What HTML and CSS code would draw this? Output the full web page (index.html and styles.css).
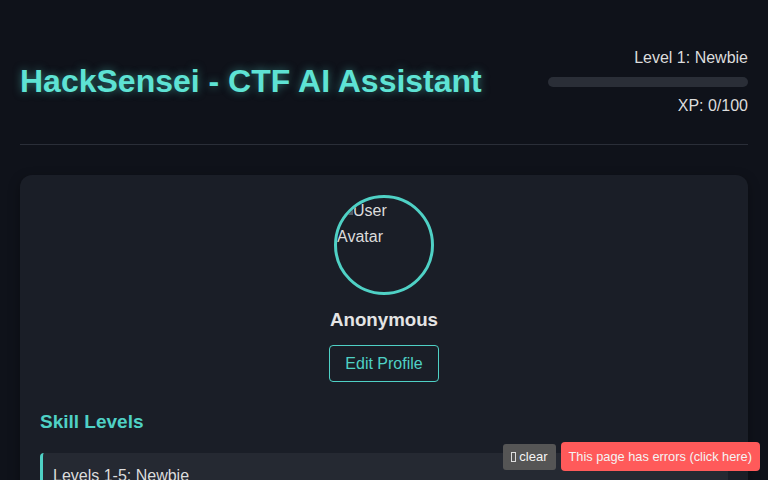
FILE: index.html
```html
<!DOCTYPE html>
<html lang="en">
<head>
<meta charset="utf-8">
<title>HackSensei - CTF AI Assistant</title>
<link rel="stylesheet" href="styles.css">
</head>
<body>
<div class="container">
  <header class="header">
    <h1 class="title">HackSensei - CTF AI Assistant</h1>
    <div class="level-info">
      <div class="level-text">Level 1: Newbie</div>
      <div class="xp-bar"><div class="xp-fill" style="width:0%"></div></div>
      <div class="xp-text">XP: 0/100</div>
    </div>
  </header>
  <section class="card profile">
    <div class="avatar"><span class="broken"></span><span class="alt">User Avatar</span></div>
    <h2 class="username">Anonymous</h2>
    <button class="edit-btn">Edit Profile</button>
    <div class="skills">
      <h3 class="skills-title">Skill Levels</h3>
      <div class="skill-item">Levels 1-5: Newbie</div>
    </div>
  </section>
</div>
<div class="error-bar">
  <button class="clear-btn"><span class="tofu"></span> clear</button>
  <button class="error-btn">This page has errors (click here)</button>
</div>
</body>
</html>
```
FILE: styles.css
```css
* { box-sizing: border-box; }
html, body { margin: 0; padding: 0; }
body {
  background: #0f121a;
  color: #e0e0e0;
  font-family: "Liberation Sans", Arial, sans-serif;
  font-size: 16px;
  line-height: 1.6;
  height: 480px;
  overflow: hidden;
}
.container { padding: 20px; }
.header {
  display: flex;
  justify-content: space-between;
  align-items: center;
  padding: 25px 0 26px;
  border-bottom: 1px solid #2a2e38;
  margin-bottom: 30px;
}
.title {
  margin: 0;
  font-size: 32px;
  line-height: 1.2;
  color: #5ee3d4;
  text-shadow: 0 0 9px rgba(79, 209, 197, 0.5);
}
.level-info {
  width: 200px;
  text-align: right;
  color: #dcdcdc;
}
.xp-bar {
  height: 10px;
  border-radius: 5px;
  background: #2a2e37;
  margin: 6px 0;
  overflow: hidden;
}
.xp-fill { height: 100%; background: #4fd1c5; }
.card {
  background: #1a1e27;
  border-radius: 12px;
  padding: 20px;
  box-shadow: 0 4px 12px rgba(0,0,0,0.35);
}
.profile {
  display: flex;
  flex-direction: column;
  align-items: center;
}
.avatar {
  width: 100px;
  height: 100px;
  border: 3px solid #4fd1c5;
  border-radius: 50%;
  overflow: hidden;
  position: relative;
  text-align: left;
  line-height: 1.6;
  color: #dcdcdc;
}
.alt { display: block; text-indent: 16px; }
.broken {
  position: absolute;
  left: 10px;
  top: 9px;
  width: 6px;
  height: 8px;
  background: #555a63;
}
.username {
  margin: 10px 0 0;
  font-size: 18.72px;
  line-height: 30px;
  color: #e4e4e4;
}
.edit-btn {
  margin-top: 10px;
  background: transparent;
  border: 1px solid #4fd1c5;
  border-radius: 4px;
  color: #4fd1c5;
  font-family: inherit;
  font-size: 16px;
  line-height: 19px;
  padding: 8px 15px;
}
.skills { align-self: stretch; margin-top: 25px; }
.skills-title {
  margin: 0 0 15px;
  font-size: 19px;
  line-height: 1.6;
  color: #4fd1c5;
}
.skill-item {
  background: #252932;
  border-left: 3px solid #4fd1c5;
  border-radius: 4px;
  padding: 10px;
  color: #dcdcdc;
}
.error-bar {
  position: fixed;
  right: 8px;
  bottom: 9px;
  display: flex;
  align-items: center;
  gap: 5px;
}
.clear-btn, .error-btn {
  border: none;
  font-family: "Liberation Sans", Arial, sans-serif;
  font-size: 12.8px;
  color: #f4f4f4;
}
.clear-btn {
  background: #555;
  border-radius: 3px;
  height: 26px;
  padding: 0 8px;
  font-size: 13px;
}
.tofu {
  display: inline-block;
  width: 5px;
  height: 10px;
  border: 1px solid #ddd;
  vertical-align: -1px;
}
.error-btn {
  background: #ff5a5a;
  border-radius: 4px;
  height: 29px;
  padding: 0 8px;
}
```
